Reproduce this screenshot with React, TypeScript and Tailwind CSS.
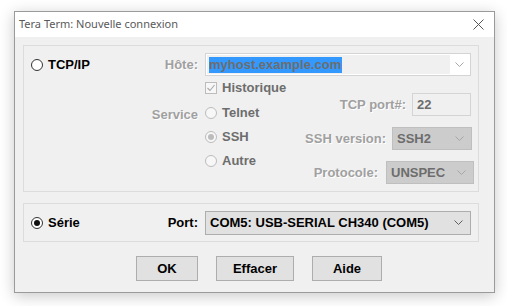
const font = { fontFamily: '"Liberation Sans", Arial, sans-serif' };

function Chevron({ color }: { color: string }) {
  return (
    <svg width="9" height="5" viewBox="0 0 9 5" className="shrink-0">
      <path d="M0.5 0.5 L4.5 4.5 L8.5 0.5" fill="none" stroke={color} strokeWidth="1" />
    </svg>
  );
}

function Radio({ checked, disabled }: { checked?: boolean; disabled?: boolean }) {
  return (
    <span
      className={
        "flex h-[12px] w-[12px] shrink-0 items-center justify-center rounded-full border " +
        (disabled ? "border-[#bcbcbc] bg-[#f7f7f7]" : "border-[#333333] bg-white")
      }
    >
      {checked && (
        <span className={"h-[6px] w-[6px] rounded-full " + (disabled ? "bg-[#bcbcbc]" : "bg-[#111111]")} />
      )}
    </span>
  );
}

function DisabledSelect({ value, width }: { value: string; width: string }) {
  return (
    <div className={`flex h-[23px] ${width} items-center justify-between border border-[#bfbfbf] bg-[#cccccc] pl-[4px] pr-[7px] text-[#6d6d6d]`}>
      <span>{value}</span>
      <Chevron color="#a6a6a6" />
    </div>
  );
}

export default function App() {
  const label = "text-[#a0a0a0] [text-shadow:1px_1px_0_#ffffff]";
  return (
    <div className="h-[306px] w-[507px] bg-white pl-[14px] pt-[11px]" style={font}>
      <div className="flex h-[282px] w-[481px] flex-col border border-[#9a9a9a] bg-[#f0f0f0] shadow-[0_3px_14px_rgba(0,0,0,0.22)]">
        {/* title bar */}
        <div className="flex h-[25px] items-center justify-between bg-white pl-[4px] pr-[10px]">
          <span className="text-[11px] text-[#595959]" style={{ fontFamily: '"Noto Sans", "Open Sans", sans-serif' }}>
            Tera Term: Nouvelle connexion
          </span>
          <svg width="11" height="11" viewBox="0 0 11 11">
            <path d="M0.5 0.5 L10.5 10.5 M10.5 0.5 L0.5 10.5" stroke="#555555" strokeWidth="1" />
          </svg>
        </div>

        <div className="flex flex-col px-[8px] pt-[8px] text-[13px] font-bold">
          {/* TCP/IP group */}
          <div className="flex h-[147px] w-[456px] flex-col border border-[#dcdcdc]">
            <div className="mt-[7px] flex h-[23px] items-center">
              <div className="flex w-[175px] items-center justify-between pl-[7px] pr-[1px]">
                <div className="flex items-center gap-[5px] text-black">
                  <Radio />
                  <span>TCP/IP</span>
                </div>
                <span className={label}>Hôte:</span>
              </div>
              <div className="ml-[6px] flex h-[23px] w-[266px] items-center border border-[#d4d4d4] bg-white p-[1px]">
                <div className="flex h-full flex-1 items-center bg-[#f0f0f0] pl-[2px]">
                  <span className="flex h-[16px] items-center bg-[#3399ff] pr-[1px] text-[#6d6d6d]">myhost.example.com</span>
                </div>
                <div className="flex w-[19px] justify-center">
                  <Chevron color="#a6a6a6" />
                </div>
              </div>
            </div>

            <div className="mt-[6px] flex h-[12px] items-center pl-[181px]">
              <span className="flex h-[12px] w-[12px] items-center justify-center border border-[#bcbcbc] bg-[#f7f7f7]">
                <svg width="10" height="10" viewBox="0 0 10 10">
                  <path d="M1.5 5 L4 7.5 L8.5 2" fill="none" stroke="#a8a8a8" strokeWidth="1.1" />
                </svg>
              </span>
              <span className="ml-[5px] text-[#6d6d6d]">Historique</span>
            </div>

            <div className="flex">
              <div className="w-[175px] pr-[1px] pt-[11px] text-right">
                <span className={label}>Service</span>
              </div>
              <div className="ml-[6px] mt-[7px] flex flex-col text-[#6d6d6d]">
                <div className="flex h-[24px] items-center gap-[5px]">
                  <Radio disabled />
                  <span>Telnet</span>
                </div>
                <div className="flex h-[24px] items-center gap-[5px]">
                  <Radio disabled checked />
                  <span>SSH</span>
                </div>
                <div className="flex h-[24px] items-center gap-[5px]">
                  <Radio disabled />
                  <span>Autre</span>
                </div>
              </div>
              <div className="-mt-[1px] flex flex-1 flex-col items-end">
                <div className="flex items-center gap-[6px] pr-[7px]">
                  <span className={label}>TCP port#:</span>
                  <div className="flex h-[23px] w-[59px] items-center border border-[#d4d4d4] bg-[#f0f0f0] pl-[4px] text-[#6d6d6d]">
                    22
                  </div>
                </div>
                <div className="mt-[11px] flex items-center gap-[6px] pr-[6px]">
                  <span className={label}>SSH version:</span>
                  <DisabledSelect value="SSH2" width="w-[80px]" />
                </div>
                <div className="mt-[11px] flex items-center gap-[8px] pr-[4px]">
                  <span className={label}>Protocole:</span>
                  <DisabledSelect value="UNSPEC" width="w-[88px]" />
                </div>
              </div>
            </div>
          </div>

          {/* Serial group */}
          <div className="mt-[11px] flex h-[39px] w-[456px] items-center border border-[#dcdcdc]">
            <div className="flex w-[175px] items-center justify-between pl-[7px] pr-[1px] text-black">
              <div className="flex items-center gap-[5px]">
                <Radio checked />
                <span>Série</span>
              </div>
              <span>Port:</span>
            </div>
            <div className="ml-[6px] flex h-[24px] w-[266px] items-center justify-between border border-[#adadad] bg-[#e1e1e1] pl-[4px] pr-[7px] text-black">
              <span>COM5: USB-SERIAL CH340 (COM5)</span>
              <Chevron color="#606060" />
            </div>
          </div>

          {/* buttons */}
          <div className="mt-[14px] flex gap-[18px] pl-[113px] text-black">
            <button className="h-[25px] w-[62px] border border-[#adadad] bg-[#e1e1e1]">OK</button>
            <button className="h-[25px] w-[78px] border border-[#adadad] bg-[#e1e1e1]">Effacer</button>
            <button className="h-[25px] w-[70px] border border-[#adadad] bg-[#e1e1e1]">Aide</button>
          </div>
        </div>
      </div>
    </div>
  );
}
